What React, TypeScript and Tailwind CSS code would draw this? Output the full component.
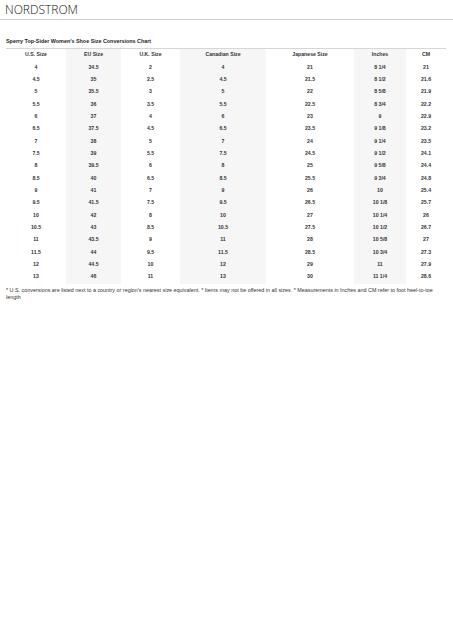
import React from "react";

const rows: string[][] = [
  ["4", "34.5", "2", "4", "21", "8 1/4", "21"],
  ["4.5", "35", "2.5", "4.5", "21.5", "8 1/2", "21.6"],
  ["5", "35.5", "3", "5", "22", "8 5/8", "21.9"],
  ["5.5", "36", "3.5", "5.5", "22.5", "8 3/4", "22.2"],
  ["6", "37", "4", "6", "23", "9", "22.9"],
  ["6.5", "37.5", "4.5", "6.5", "23.5", "9 1/8", "23.2"],
  ["7", "38", "5", "7", "24", "9 1/4", "23.5"],
  ["7.5", "39", "5.5", "7.5", "24.5", "9 1/2", "24.1"],
  ["8", "39.5", "6", "8", "25", "9 5/8", "24.4"],
  ["8.5", "40", "6.5", "8.5", "25.5", "9 3/4", "24.8"],
  ["9", "41", "7", "9", "26", "10", "25.4"],
  ["9.5", "41.5", "7.5", "9.5", "26.5", "10 1/8", "25.7"],
  ["10", "42", "8", "10", "27", "10 1/4", "26"],
  ["10.5", "43", "8.5", "10.5", "27.5", "10 1/2", "26.7"],
  ["11", "43.5", "9", "11", "28", "10 5/8", "27"],
  ["11.5", "44", "9.5", "11.5", "28.5", "10 3/4", "27.3"],
  ["12", "44.5", "10", "12", "29", "11", "27.9"],
  ["13", "46", "11", "13", "30", "11 1/4", "28.6"],
];

const headers = ["U.S. Size", "EU Size", "U.K. Size", "Canadian Size", "Japanese Size", "Inches", "CM"];
const striped = [false, true, false, true, false, true, false];

export default function App() {
  return (
    <div className="w-[453px] min-h-[640px] bg-white text-[#333]" style={{ fontFamily: '"Liberation Sans", Arial, sans-serif' }}>
      <div className="h-[20px] border-b border-[#cfcfcf] pl-[5px] pt-[3px]">
        <div
          className="text-[12px] leading-[14px] font-light text-[#111]"
          style={{ fontFamily: '"Open Sans", Lato, sans-serif' }}
        >
          NORDSTROM
        </div>
      </div>
      <div className="px-[6px]">
        <div className="pt-[18px] h-[28px] text-[5.4px] leading-[6px] font-bold text-[#222]">
          Sperry Top-Sider Women's Shoe Size Conversions Chart
        </div>
        <div className="w-[440px] border-t border-[#d6d6d6] grid grid-cols-[60px_55px_59px_86px_88px_52px_40px]">
          {headers.map((h, i) => (
            <div
              key={h}
              className={`h-[12.35px] flex items-center justify-center text-[5.2px] font-bold ${striped[i] ? "bg-[#f6f6f6]" : ""}`}
            >
              {h}
            </div>
          ))}
          {rows.map((r, ri) =>
            r.map((c, ci) => (
              <div
                key={`${ri}-${ci}`}
                className={`h-[12.35px] flex items-center justify-center text-[5.2px] font-bold ${striped[ci] ? "bg-[#f6f6f6]" : ""}`}
              >
                {c}
              </div>
            ))
          )}
        </div>
        <div className="w-[432px] pt-[3px] text-[5.4px] leading-[7px] text-[#333]">
          * U.S. conversions are listed next to a country or region's nearest size equivalent. * Items may not be offered in all sizes. * Measurements in Inches and CM refer to foot heel-to-toe length
        </div>
      </div>
    </div>
  );
}
